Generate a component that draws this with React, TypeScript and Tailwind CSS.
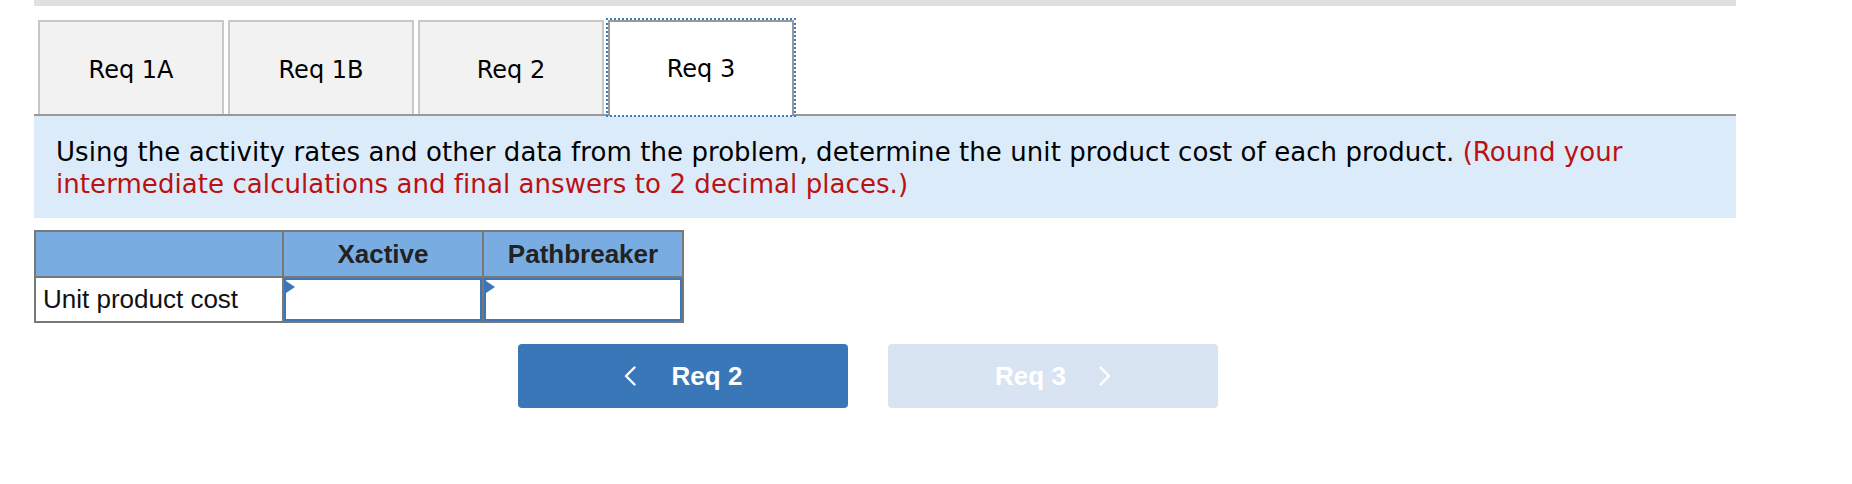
import React from "react";

const tabs = ["Req 1A", "Req 1B", "Req 2"];

function Chevron({ dir, className }: { dir: "left" | "right"; className?: string }) {
  return (
    <svg width="12" height="20" viewBox="0 0 12 20" fill="none" className={className}>
      <polyline
        points={dir === "left" ? "10.5,1.5 2,10 10.5,18.5" : "1.5,1.5 10,10 1.5,18.5"}
        stroke="currentColor"
        strokeWidth="2.4"
        strokeLinecap="round"
        strokeLinejoin="round"
      />
    </svg>
  );
}

function InputCell() {
  return (
    <div className="relative h-[43px] bg-white border-2 border-[#3a76b9]">
      <svg width="9" height="12" viewBox="0 0 9 12" className="absolute left-0 top-[1px]">
        <polygon points="0,0 9,6 0,12" fill="#3a76b9" />
      </svg>
    </div>
  );
}

export default function App() {
  return (
    <div className="w-[1852px] h-[484px] bg-white">
      <div className="ml-[34px] w-[1702px]">
        {/* top strip */}
        <div className="h-[6px] bg-[#e0e0e0]" />

        {/* tabs */}
        <div className="mt-[14px] flex gap-[4px] pl-[4px] border-b-2 border-[#999999] font-['DejaVu_Sans',Verdana,sans-serif] text-[24px] text-black">
          {tabs.map((t) => (
            <div
              key={t}
              className="w-[186px] h-[94px] pt-[3px] flex items-center justify-center bg-[#f2f2f2] border-2 border-b-0 border-[#c8c8c8]"
            >
              {t}
            </div>
          ))}
          <div className="relative w-[186px] h-[96px] -mb-[2px] pb-[1px] flex items-center justify-center bg-white border-2 border-b-0 border-[#999999]">
            Req 3
            <span className="absolute -top-[4px] -left-[4px] -right-[4px] -bottom-[1px] border-2 border-dotted border-[#3b7bc4]" />
          </div>
        </div>

        {/* instruction */}
        <div className="h-[102px] bg-[#dcebf9] pl-[22px] pt-[20px] font-['DejaVu_Sans',Verdana,sans-serif] text-[26px] tracking-[0.07px] leading-[32px] text-black">
          Using the activity rates and other data from the problem, determine the unit product cost of each product.{" "}
          <span className="text-[#bb1111]">
            (Round your
            <br />
            intermediate calculations and final answers to 2 decimal places.)
          </span>
        </div>

        {/* table */}
        <div className="mt-[12px] w-[650px] grid grid-cols-[246px_198px_198px] gap-[2px] p-[2px] bg-[#787878] font-['Liberation_Sans',Arial,sans-serif] text-[26px]">
          <div className="h-[44px] bg-[#79ade2]" />
          <div className="h-[44px] bg-[#79ade2] flex items-center justify-center font-bold text-[#222222]">Xactive</div>
          <div className="h-[44px] bg-[#79ade2] flex items-center justify-center font-bold text-[#222222]">Pathbreaker</div>
          <div className="h-[43px] bg-white flex items-center pl-[7px] text-[#111111]">Unit product cost</div>
          <InputCell />
          <InputCell />
        </div>

        {/* navigation */}
        <div className="mt-[21px] ml-[484px] flex gap-[40px] font-['Liberation_Sans',Arial,sans-serif] text-[26px] font-bold text-white">
          <button className="w-[330px] h-[64px] rounded-[4px] bg-[#3a77b9] flex items-center justify-center gap-[36px]">
            <Chevron dir="left" />
            <span>Req 2</span>
          </button>
          <button className="w-[330px] h-[64px] rounded-[4px] bg-[#d8e4f1] flex items-center justify-center gap-[33px]">
            <span>Req 3</span>
            <Chevron dir="right" />
          </button>
        </div>
      </div>
    </div>
  );
}
